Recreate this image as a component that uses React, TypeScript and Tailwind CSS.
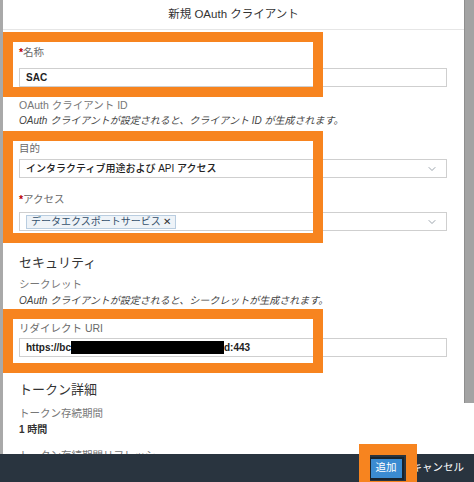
import { ChevronDown } from 'lucide-react'

const font = { fontFamily: '"Liberation Sans", "Noto Sans CJK JP", sans-serif' }

const Label = ({ text, required, className = '' }: { text: string; required?: boolean; className?: string }) => (
  <div className={`h-[16px] leading-[16px] text-[10.5px] text-[#6a6a6a] ${className}`}>
    {required && <span className="text-[#bb0000] font-bold">*</span>}
    {text}
  </div>
)

const Box = ({ children, className = '' }: { children: React.ReactNode; className?: string }) => (
  <div className={`h-[19px] border border-[#cfcfcf] bg-white flex items-center pl-[6px] pr-[8px] text-[10px] text-[#222] ${className}`}>
    {children}
  </div>
)

const Select = ({ children, className = '' }: { children: React.ReactNode; className?: string }) => (
  <Box className={className}>
    <div className="flex-1 flex items-center min-w-0">{children}</div>
    <ChevronDown className="w-[12px] h-[12px] text-[#7a8490]" strokeWidth={1.5} />
  </Box>
)

export default function App() {
  return (
    <div className="relative w-[474px] h-[482px] overflow-hidden bg-white flex flex-col" style={font}>
      <div className="flex-1 flex min-h-0">
        <div className="flex-1 flex flex-col min-w-0 border-l-[3px] border-[#a9a9a9]">
          {/* Header */}
          <div className="h-[30px] shrink-0 border-b border-[#e6e6e6] flex items-center justify-center text-[11.5px] text-[#333]">
            新規 OAuth クライアント
          </div>

          {/* Form */}
          <div className="flex-1 overflow-hidden pl-[16px] pr-[17px]">
            <Label text="名称" required className="mt-[14px]" />
            <Box className="mt-[8px] font-semibold">SAC</Box>

            <div className="mt-[11px] h-[15px] leading-[15px] text-[10.5px] text-[#777]">OAuth クライアント ID</div>
            <div className="h-[15px] leading-[15px] text-[10px] italic text-[#444]">
              OAuth クライアントが設定されると、クライアント ID が生成されます。
            </div>

            <Label text="目的" className="mt-[12px]" />
            <Select className="mt-[3px] font-medium">インタラクティブ用途および API アクセス</Select>

            <Label text="アクセス" required className="mt-[13px]" />
            <Select className="mt-[5px] pl-[3px]">
              <span className="h-[14px] px-[4px] flex items-center border border-[#b9cde0] bg-[#eef3f8] text-[10px] text-[#34506c]">
                データエクスポートサービス
                <span className="ml-[2px] text-[#333]">✕</span>
              </span>
            </Select>

            <div className="mt-[22px] h-[20px] leading-[20px] text-[13px] text-[#333]">セキュリティ</div>
            <div className="mt-[3px] h-[16px] leading-[16px] text-[10.5px] text-[#777]">シークレット</div>
            <div className="mt-[1px] h-[15px] leading-[15px] text-[10px] italic text-[#444]">
              OAuth クライアントが設定されると、シークレットが生成されます。
            </div>

            <Label text="リダイレクト URI" className="mt-[12px]" />
            <Box className="mt-[2px] font-semibold">
              https://bc
              <span className="inline-block w-[153px] h-[13px] bg-black" />
              d:443
            </Box>

            <div className="mt-[23px] h-[20px] leading-[20px] text-[13px] text-[#333]">トークン詳細</div>
            <div className="mt-[5px] h-[16px] leading-[16px] text-[10.5px] text-[#777]">トークン存続期間</div>
            <div className="mt-[1px] h-[16px] leading-[16px] text-[10px] font-semibold text-[#333]">1 時間</div>
            <div className="mt-[9px] h-[16px] leading-[16px] text-[10.5px] text-[#777]">トークン存続期間リフレッシュ</div>
          </div>
        </div>

        {/* Scrollbar */}
        <div className="w-[10px] shrink-0 flex flex-col">
          <div className="h-[403px] bg-[#a3a3a3] border-l border-[#8e8e8e]" />
          <div className="flex-1 bg-white" />
        </div>
      </div>

      {/* Footer */}
      <div className="h-[28px] shrink-0 bg-[#29343f] flex items-center justify-end pr-[10px] gap-[8px]">
        <button className="w-[35px] h-[23px] border-2 border-[#1a232c] bg-[#3b8bd1] text-white text-[10.5px] flex items-center justify-center">
          追加
        </button>
        <span className="text-[10.5px] text-white">キャンセル</span>
      </div>

      {/* Annotation overlays */}
      <div className="absolute left-[3px] top-[32px] w-[320px] h-[65px] border-[10px] border-[#f7841f]" />
      <div className="absolute left-[3px] top-[131px] w-[320px] h-[112px] border-[10px] border-[#f7841f]" />
      <div className="absolute left-[3px] top-[309px] w-[320px] h-[64px] border-[10px] border-[#f7841f]" />
      <div className="absolute left-[359px] top-[444px] w-[58px] h-[48px] border-[11px] border-[#f7841f]" />
    </div>
  )
}
